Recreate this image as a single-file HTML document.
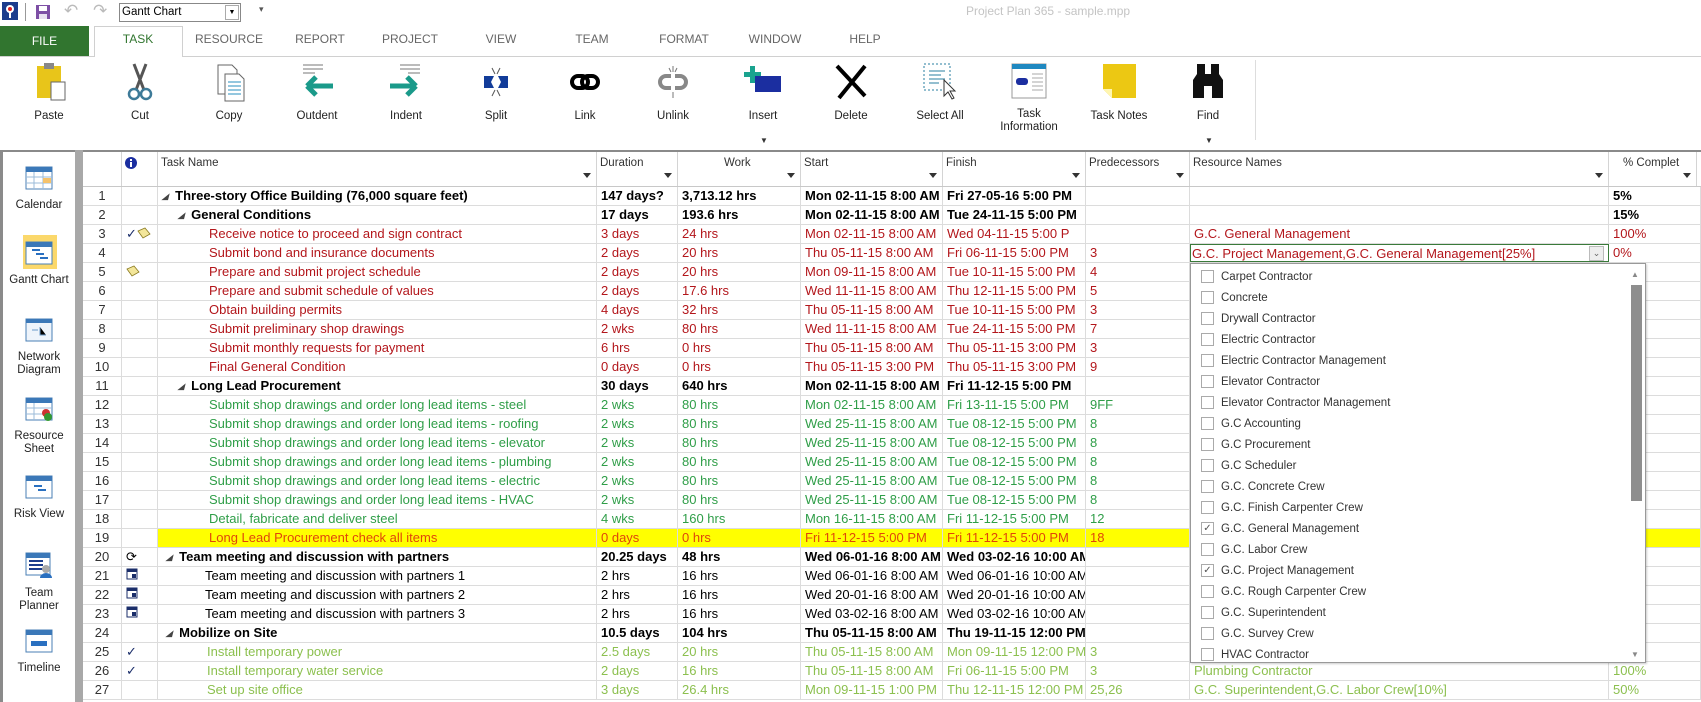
<!DOCTYPE html>
<html><head><meta charset="utf-8"><style>
*{box-sizing:border-box;margin:0;padding:0}
body{width:1701px;height:702px;overflow:hidden;background:#fff;font-family:"Liberation Sans",sans-serif;position:relative;color:#000}
.a{position:absolute}
.tab{position:absolute;top:32px;font-size:12px;color:#666;text-align:center;width:90px}
.rb{position:absolute;top:62px;width:80px;text-align:center;font-size:11.5px;color:#222}
.rb svg{display:block;margin:0 auto 8px}
.side{position:absolute;left:3px;width:72px;text-align:center;font-size:11.5px;color:#222;line-height:13px}
.side svg{display:block;margin:0 auto 8px}
.hd{position:absolute;top:152px;height:35px;border-right:1px solid #d4d4d4;font-size:11.5px;color:#333;padding:5px 0 0 3px}
.hd i{position:absolute;right:5px;bottom:9px;width:0;height:0;border-left:4px solid transparent;border-right:4px solid transparent;border-top:5px solid #333}
.row{position:absolute;left:83px;width:1618px;height:19px;border-bottom:1px solid #dcdcdc;font-size:13px;line-height:18px}
.row span{position:absolute;top:0;height:18px;white-space:nowrap;overflow:hidden;padding-left:4px;border-right:1px solid #dcdcdc}
.n{left:0;width:39px;text-align:center;padding:0!important;color:#333;background:#fff}
.i{left:39px;width:36px}
.t{left:75px;width:439px}
.d{left:514px;width:81px}
.w{left:595px;width:123px}
.s{left:718px;width:142px}
.f{left:860px;width:143px}
.p{left:1003px;width:104px}
.rn{left:1107px;width:419px}
.pc{left:1526px;width:92px}
.b{font-weight:bold}
.red{color:#b3161b}.grn{color:#2f9e48}.lg{color:#8cc04f}.or{color:#e0460a}
.y span:not(.n){background:#ffff00}
.tri{font-size:8px;color:#444;margin-right:7px;display:inline-block;transform:translateY(-1px)}
.dd{position:absolute;left:1190px;top:263px;width:456px;height:400px;background:#fff;border:1px solid #999;box-shadow:1px 1px 2px rgba(0,0,0,.2)}
.it{position:absolute;left:10px;font-size:11.5px;color:#333;height:16px;line-height:16px;white-space:nowrap}
.it b{display:inline-block;width:13px;height:13px;border:1px solid #aaa;vertical-align:middle;margin-right:7px;font-weight:normal;font-size:10px;line-height:11px;text-align:center;color:#555;overflow:hidden}
</style></head><body>

<svg class="a" style="left:2px;top:2px" width="18" height="20"><rect width="16" height="18" fill="#1b3c8c"/><circle cx="8" cy="7" r="4" fill="#fff"/><circle cx="8" cy="7" r="2" fill="#d22"/><rect x="7" y="10" width="2" height="6" fill="#fff"/></svg>
<div class="a" style="left:25px;top:3px;width:1px;height:18px;background:#999"></div>
<svg class="a" style="left:35px;top:4px" width="16" height="16"><rect x="1" y="1" width="14" height="14" fill="#7d4fa5"/><rect x="4" y="2" width="8" height="5" fill="#fff"/><rect x="4" y="10" width="8" height="5" fill="#e8e0f0"/></svg>
<div class="a" style="left:64px;top:1px;font-size:17px;color:#bbb">↶</div>
<div class="a" style="left:93px;top:1px;font-size:17px;color:#bbb">↷</div>
<div class="a" style="left:119px;top:3px;width:122px;height:19px;border:1px solid #888;font-size:11.5px;padding:2px 0 0 2px">Gantt Chart<div class="a" style="right:1px;top:1px;width:14px;height:15px;border:1px solid #aaa;font-size:7px;text-align:center;line-height:14px">▼</div></div>
<div class="a" style="left:259px;top:4px;font-size:9px;color:#555">▾</div>
<div class="a" style="left:966px;top:4px;font-size:12px;color:#c4c4c4">Project Plan 365 - sample.mpp</div>

<div class="a" style="left:0;top:26px;width:89px;height:30px;background:#31752f;color:#fff;font-size:12px;text-align:center;line-height:30px">FILE</div>
<div class="a" style="left:94px;top:26px;width:89px;height:31px;border:1px solid #d0d0d0;border-bottom:none;background:#fff"></div>
<div class="a" style="left:0;top:56px;width:1701px;height:1px;background:#d0d0d0"></div>
<div class="a" style="left:95px;top:56px;width:87px;height:1px;background:#fff"></div>
<div class="tab" style="left:93px;color:#31752f">TASK</div>
<div class="tab" style="left:184px">RESOURCE</div>
<div class="tab" style="left:275px">REPORT</div>
<div class="tab" style="left:365px">PROJECT</div>
<div class="tab" style="left:456px">VIEW</div>
<div class="tab" style="left:547px">TEAM</div>
<div class="tab" style="left:639px">FORMAT</div>
<div class="tab" style="left:730px">WINDOW</div>
<div class="tab" style="left:820px">HELP</div>

<div class="rb" style="left:9px"><svg width="40" height="40"><rect x="8" y="4" width="24" height="32" fill="#e8c51a"/><rect x="15" y="1" width="10" height="6" fill="#888"/><path d="M22 20h14v18H22z" fill="#fff" stroke="#666"/></svg>Paste</div>
<div class="rb" style="left:100px"><svg width="40" height="40"><path d="M14 2l10 26M26 2L16 28" stroke="#555" stroke-width="3"/><circle cx="14" cy="32" r="5" fill="none" stroke="#3d7a98" stroke-width="2.5"/><circle cx="26" cy="32" r="5" fill="none" stroke="#3d7a98" stroke-width="2.5"/></svg>Cut</div>
<div class="rb" style="left:189px"><svg width="40" height="40"><path d="M9 3h14l5 5v24H9z" fill="#fff" stroke="#666"/><path d="M16 12h14l5 5v22H16z" fill="#fff" stroke="#666"/><path d="M19 20h13M19 24h13M19 28h13M19 32h13" stroke="#2a8fbf"/></svg>Copy</div>
<div class="rb" style="left:277px"><svg width="40" height="40"><path d="M6 3h20M6 7h20M6 11h12" stroke="#777"/><path d="M10 24h26M10 24l9-9M10 24l9 9" stroke="#1a9a8a" stroke-width="5"/></svg>Outdent</div>
<div class="rb" style="left:366px"><svg width="40" height="40"><path d="M14 3h20M14 7h20M22 11h12" stroke="#777"/><path d="M4 24h26M30 24l-9-9M30 24l-9 9" stroke="#1a9a8a" stroke-width="5"/></svg>Indent</div>
<div class="rb" style="left:456px"><svg width="40" height="40"><path d="M8 14h10l-3 6 3 6H8zM32 14H22l3 6-3 6h10z" fill="#123c99"/><path d="M16 6l3 6M24 6l-3 6M16 34l3-6M24 34l-3-6" stroke="#555"/></svg>Split</div>
<div class="rb" style="left:545px"><svg width="40" height="40"><rect x="7" y="14" width="16" height="12" rx="6" fill="none" stroke="#000" stroke-width="4"/><rect x="17" y="14" width="16" height="12" rx="6" fill="none" stroke="#000" stroke-width="4"/></svg>Link</div>
<div class="rb" style="left:633px"><svg width="40" height="40"><path d="M18 14h-5a6 6 0 000 12h5M22 14h5a6 6 0 010 12h-5" fill="none" stroke="#888" stroke-width="4"/><path d="M20 4v6M20 30v6M16 6l2 4M24 6l-2 4" stroke="#777"/></svg>Unlink</div>
<div class="rb" style="left:723px"><svg width="40" height="40"><path d="M7 4h5v6h6v5h-6v6H7v-6H1v-5h6z" fill="#1aa38f"/><rect x="12" y="14" width="26" height="16" fill="#1b2ea0"/></svg>Insert</div>
<div class="rb" style="left:811px"><svg width="40" height="40"><path d="M6 4l28 30M34 4L8 36" stroke="#000" stroke-width="4"/></svg>Delete</div>
<div class="rb" style="left:900px"><svg width="40" height="40"><rect x="4" y="2" width="26" height="26" fill="none" stroke="#2a7fa0" stroke-dasharray="2 2"/><path d="M9 9h16M9 13h12M9 17h16M9 21h10" stroke="#2a7fa0"/><path d="M24 18v16l4-4 4 7 2-1-4-7h5z" fill="#fff" stroke="#333"/></svg>Select All</div>
<div class="rb" style="left:989px;line-height:13px;top:62px"><svg width="40" height="40" style="margin-bottom:6px"><rect x="3" y="2" width="34" height="34" fill="#fff" stroke="#999"/><rect x="3" y="2" width="34" height="5" fill="#1f88c0"/><rect x="7" y="16" width="12" height="7" rx="3" fill="#1b2ea0"/><path d="M23 12h11M23 16h11M23 20h11M23 24h11M23 28h11" stroke="#aaa"/></svg>Task<br>Information</div>
<div class="rb" style="left:1079px"><svg width="40" height="40"><path d="M4 2h33v34H13l-9-9z" fill="#ecc813"/><path d="M4 27h9v9z" fill="#fff6b0"/></svg>Task Notes</div>
<div class="rb" style="left:1168px"><svg width="40" height="40"><path d="M9 2h8v10h6V2h8v10l4 6v18H24V24h-8v12H5V18l4-6z" fill="#111"/></svg>Find</div>
<div class="a" style="left:760px;top:136px;font-size:8px;color:#333">▼</div>
<div class="a" style="left:1205px;top:136px;font-size:8px;color:#333">▼</div>
<div class="a" style="left:1255px;top:60px;width:1px;height:80px;background:#ddd"></div>

<div class="a" style="left:0;top:150px;width:1701px;height:2px;background:#8a8a8a"></div>
<div class="a" style="left:0;top:150px;width:3px;height:552px;background:#8a8a8a"></div>
<div class="a" style="left:75px;top:150px;width:8px;height:552px;background:#a8a8a8"></div>

<div class="side" style="top:165px"><svg width="30" height="26"><rect x="2" y="2" width="26" height="22" fill="#fff" stroke="#4a7fb5"/><rect x="2" y="2" width="26" height="5" fill="#3b78b8"/><path d="M2 12h26M2 18h26M10 7v17M19 7v17" stroke="#9bbbd9"/><rect x="19" y="13" width="8" height="5" fill="#f5c26b"/></svg>Calendar</div>
<div class="a" style="left:23px;top:235px;width:34px;height:34px;background:#fbd86b"></div>
<div class="side" style="top:240px"><svg width="30" height="26"><rect x="2" y="2" width="26" height="22" fill="#fff" stroke="#4a7fb5"/><rect x="2" y="2" width="26" height="5" fill="#3b78b8"/><path d="M8 10h8M12 14h8M16 18h8" stroke="#2a70c0" stroke-width="2"/></svg>Gantt Chart</div>
<div class="side" style="top:317px"><svg width="30" height="26"><rect x="2" y="2" width="26" height="22" fill="#eef4fb" stroke="#4a7fb5"/><rect x="2" y="2" width="26" height="4" fill="#3b78b8"/><path d="M8 13h6M16 10v8h6" stroke="#6a9ac9"/></svg>Network<br>Diagram</div>
<div class="side" style="top:396px"><svg width="30" height="26"><rect x="2" y="2" width="26" height="22" fill="#fff" stroke="#4a7fb5"/><rect x="2" y="2" width="26" height="5" fill="#3b78b8"/><path d="M2 12h26M2 18h26M10 7v17" stroke="#9bbbd9"/><circle cx="22" cy="17" r="4" fill="#c33"/><circle cx="24" cy="21" r="4" fill="#393"/></svg>Resource<br>Sheet</div>
<div class="side" style="top:474px"><svg width="30" height="26"><rect x="2" y="2" width="26" height="22" fill="#fff" stroke="#4a7fb5"/><rect x="2" y="2" width="26" height="5" fill="#3b78b8"/><path d="M10 12h8M14 16h8" stroke="#2a70c0" stroke-width="2"/></svg>Risk View</div>
<div class="side" style="top:551px"><svg width="30" height="28"><rect x="2" y="2" width="24" height="22" fill="#fff" stroke="#4a7fb5"/><rect x="2" y="2" width="24" height="5" fill="#3b78b8"/><path d="M5 10h14M5 14h14M5 18h14" stroke="#1b3c8c" stroke-width="2"/><circle cx="22" cy="18" r="4" fill="#aaa"/><path d="M16 27a6 5 0 0112 0z" fill="#2a70c0"/></svg>Team<br>Planner</div>
<div class="side" style="top:628px"><svg width="30" height="26"><rect x="2" y="2" width="26" height="22" fill="#fff" stroke="#4a7fb5"/><rect x="2" y="2" width="26" height="5" fill="#3b78b8"/><rect x="7" y="13" width="16" height="5" fill="#2a70c0"/></svg>Timeline</div>

<div class="hd" style="left:83px;width:39px"></div>
<div class="hd" style="left:122px;width:36px"><svg width="12" height="12"><circle cx="6" cy="6" r="6" fill="#1b2ea0"/><rect x="5" y="5" width="2" height="5" fill="#fff"/><rect x="5" y="2" width="2" height="2" fill="#fff"/></svg></div>
<div class="hd" style="left:158px;width:439px">Task Name<i></i></div>
<div class="hd" style="left:597px;width:81px">Duration<i></i></div>
<div class="hd" style="left:678px;width:123px;padding-left:46px">Work<i></i></div>
<div class="hd" style="left:801px;width:142px">Start<i></i></div>
<div class="hd" style="left:943px;width:143px">Finish<i></i></div>
<div class="hd" style="left:1086px;width:104px">Predecessors<i></i></div>
<div class="hd" style="left:1190px;width:419px">Resource Names<i></i></div>
<div class="hd" style="left:1609px;width:88px;padding-left:14px">% Complet<i></i></div>
<div class="a" style="left:83px;top:186px;width:1618px;height:1px;background:#c8c8c8"></div>

<div class="row b" style="top:187px"><span class="n" style="font-weight:normal">1</span><span class="i"></span><span class="t"><em class="tri">◢</em>Three-story Office Building (76,000 square feet)</span><span class="d">147 days?</span><span class="w">3,713.12 hrs</span><span class="s">Mon 02-11-15 8:00 AM</span><span class="f">Fri 27-05-16 5:00 PM</span><span class="p"></span><span class="rn"></span><span class="pc">5%</span></div>
<div class="row b" style="top:206px"><span class="n" style="font-weight:normal">2</span><span class="i"></span><span class="t" style="padding-left:20px"><em class="tri">◢</em>General Conditions</span><span class="d">17 days</span><span class="w">193.6 hrs</span><span class="s">Mon 02-11-15 8:00 AM</span><span class="f">Tue 24-11-15 5:00 PM</span><span class="p"></span><span class="rn"></span><span class="pc">15%</span></div>
<div class="row red" style="top:225px"><span class="n">3</span><span class="i" style="color:#1b2e6a">✓<svg width="14" height="12" style="vertical-align:-1px"><path d="M1 4l7-3 5 6-7 4z" fill="#f3e69a" stroke="#8a7a20" stroke-width=".8"/></svg></span><span class="t" style="padding-left:51px">Receive notice to proceed and sign contract</span><span class="d">3 days</span><span class="w">24 hrs</span><span class="s">Mon 02-11-15 8:00 AM</span><span class="f">Wed 04-11-15 5:00 P</span><span class="p"></span><span class="rn">G.C. General Management</span><span class="pc">100%</span></div>
<div class="row red" style="top:244px"><span class="n">4</span><span class="i"></span><span class="t" style="padding-left:51px">Submit bond and insurance documents</span><span class="d">2 days</span><span class="w">20 hrs</span><span class="s">Thu 05-11-15 8:00 AM</span><span class="f">Fri 06-11-15 5:00 PM</span><span class="p">3</span><span class="rn" style="border:1px solid #3a7a3a;padding-left:1px">G.C. Project Management,G.C. General Management[25%]</span><span class="pc">0%</span></div>
<div class="a" style="left:1589px;top:246px;width:15px;height:15px;border:1px solid #bbb;background:#eee;font-size:9px;text-align:center;line-height:13px;color:#666">⌄</div>
<div class="row red" style="top:263px"><span class="n">5</span><span class="i"><svg width="14" height="12" style="vertical-align:-1px"><path d="M1 4l7-3 5 6-7 4z" fill="#f3e69a" stroke="#8a7a20" stroke-width=".8"/></svg></span><span class="t" style="padding-left:51px">Prepare and submit project schedule</span><span class="d">2 days</span><span class="w">20 hrs</span><span class="s">Mon 09-11-15 8:00 AM</span><span class="f">Tue 10-11-15 5:00 PM</span><span class="p">4</span><span class="rn"></span><span class="pc"></span></div>
<div class="row red" style="top:282px"><span class="n">6</span><span class="i"></span><span class="t" style="padding-left:51px">Prepare and submit schedule of values</span><span class="d">2 days</span><span class="w">17.6 hrs</span><span class="s">Wed 11-11-15 8:00 AM</span><span class="f">Thu 12-11-15 5:00 PM</span><span class="p">5</span><span class="rn"></span><span class="pc"></span></div>
<div class="row red" style="top:301px"><span class="n">7</span><span class="i"></span><span class="t" style="padding-left:51px">Obtain building permits</span><span class="d">4 days</span><span class="w">32 hrs</span><span class="s">Thu 05-11-15 8:00 AM</span><span class="f">Tue 10-11-15 5:00 PM</span><span class="p">3</span><span class="rn"></span><span class="pc"></span></div>
<div class="row red" style="top:320px"><span class="n">8</span><span class="i"></span><span class="t" style="padding-left:51px">Submit preliminary shop drawings</span><span class="d">2 wks</span><span class="w">80 hrs</span><span class="s">Wed 11-11-15 8:00 AM</span><span class="f">Tue 24-11-15 5:00 PM</span><span class="p">7</span><span class="rn"></span><span class="pc"></span></div>
<div class="row red" style="top:339px"><span class="n">9</span><span class="i"></span><span class="t" style="padding-left:51px">Submit monthly requests for payment</span><span class="d">6 hrs</span><span class="w">0 hrs</span><span class="s">Thu 05-11-15 8:00 AM</span><span class="f">Thu 05-11-15 3:00 PM</span><span class="p">3</span><span class="rn"></span><span class="pc"></span></div>
<div class="row red" style="top:358px"><span class="n">10</span><span class="i"></span><span class="t" style="padding-left:51px">Final General Condition</span><span class="d">0 days</span><span class="w">0 hrs</span><span class="s">Thu 05-11-15 3:00 PM</span><span class="f">Thu 05-11-15 3:00 PM</span><span class="p">9</span><span class="rn"></span><span class="pc"></span></div>
<div class="row b" style="top:377px"><span class="n" style="font-weight:normal">11</span><span class="i"></span><span class="t" style="padding-left:20px"><em class="tri">◢</em>Long Lead Procurement</span><span class="d">30 days</span><span class="w">640 hrs</span><span class="s">Mon 02-11-15 8:00 AM</span><span class="f">Fri 11-12-15 5:00 PM</span><span class="p"></span><span class="rn"></span><span class="pc"></span></div>
<div class="row grn" style="top:396px"><span class="n">12</span><span class="i"></span><span class="t" style="padding-left:51px">Submit shop drawings and order long lead items - steel</span><span class="d">2 wks</span><span class="w">80 hrs</span><span class="s">Mon 02-11-15 8:00 AM</span><span class="f">Fri 13-11-15 5:00 PM</span><span class="p">9FF</span><span class="rn"></span><span class="pc"></span></div>
<div class="row grn" style="top:415px"><span class="n">13</span><span class="i"></span><span class="t" style="padding-left:51px">Submit shop drawings and order long lead items - roofing</span><span class="d">2 wks</span><span class="w">80 hrs</span><span class="s">Wed 25-11-15 8:00 AM</span><span class="f">Tue 08-12-15 5:00 PM</span><span class="p">8</span><span class="rn"></span><span class="pc"></span></div>
<div class="row grn" style="top:434px"><span class="n">14</span><span class="i"></span><span class="t" style="padding-left:51px">Submit shop drawings and order long lead items - elevator</span><span class="d">2 wks</span><span class="w">80 hrs</span><span class="s">Wed 25-11-15 8:00 AM</span><span class="f">Tue 08-12-15 5:00 PM</span><span class="p">8</span><span class="rn"></span><span class="pc"></span></div>
<div class="row grn" style="top:453px"><span class="n">15</span><span class="i"></span><span class="t" style="padding-left:51px">Submit shop drawings and order long lead items - plumbing</span><span class="d">2 wks</span><span class="w">80 hrs</span><span class="s">Wed 25-11-15 8:00 AM</span><span class="f">Tue 08-12-15 5:00 PM</span><span class="p">8</span><span class="rn"></span><span class="pc"></span></div>
<div class="row grn" style="top:472px"><span class="n">16</span><span class="i"></span><span class="t" style="padding-left:51px">Submit shop drawings and order long lead items - electric</span><span class="d">2 wks</span><span class="w">80 hrs</span><span class="s">Wed 25-11-15 8:00 AM</span><span class="f">Tue 08-12-15 5:00 PM</span><span class="p">8</span><span class="rn"></span><span class="pc"></span></div>
<div class="row grn" style="top:491px"><span class="n">17</span><span class="i"></span><span class="t" style="padding-left:51px">Submit shop drawings and order long lead items - HVAC</span><span class="d">2 wks</span><span class="w">80 hrs</span><span class="s">Wed 25-11-15 8:00 AM</span><span class="f">Tue 08-12-15 5:00 PM</span><span class="p">8</span><span class="rn"></span><span class="pc"></span></div>
<div class="row grn" style="top:510px"><span class="n">18</span><span class="i"></span><span class="t" style="padding-left:51px">Detail, fabricate and deliver steel</span><span class="d">4 wks</span><span class="w">160 hrs</span><span class="s">Mon 16-11-15 8:00 AM</span><span class="f">Fri 11-12-15 5:00 PM</span><span class="p">12</span><span class="rn"></span><span class="pc"></span></div>
<div class="row or y" style="top:529px"><span class="n">19</span><span class="i" style="background:#fff!important"></span><span class="t" style="padding-left:51px">Long Lead Procurement check all items</span><span class="d">0 days</span><span class="w">0 hrs</span><span class="s">Fri 11-12-15 5:00 PM</span><span class="f">Fri 11-12-15 5:00 PM</span><span class="p">18</span><span class="rn"></span><span class="pc"></span></div>
<div class="row b" style="top:548px"><span class="n" style="font-weight:normal">20</span><span class="i" style="font-weight:normal">⟳</span><span class="t" style="padding-left:8px"><em class="tri">◢</em>Team meeting and discussion with partners</span><span class="d">20.25 days</span><span class="w">48 hrs</span><span class="s">Wed 06-01-16 8:00 AM</span><span class="f">Wed 03-02-16 10:00 AM</span><span class="p"></span><span class="rn"></span><span class="pc"></span></div>
<div class="row" style="top:567px"><span class="n">21</span><span class="i"><svg width="12" height="12"><rect x="1" y="1" width="10" height="10" fill="#fff" stroke="#1b2e6a"/><rect x="1" y="1" width="10" height="3" fill="#1b2e6a"/><rect x="6" y="6" width="4" height="4" fill="#1b2e6a"/></svg></span><span class="t" style="padding-left:47px">Team meeting and discussion with partners 1</span><span class="d">2 hrs</span><span class="w">16 hrs</span><span class="s">Wed 06-01-16 8:00 AM</span><span class="f">Wed 06-01-16 10:00 AM</span><span class="p"></span><span class="rn"></span><span class="pc"></span></div>
<div class="row" style="top:586px"><span class="n">22</span><span class="i"><svg width="12" height="12"><rect x="1" y="1" width="10" height="10" fill="#fff" stroke="#1b2e6a"/><rect x="1" y="1" width="10" height="3" fill="#1b2e6a"/><rect x="6" y="6" width="4" height="4" fill="#1b2e6a"/></svg></span><span class="t" style="padding-left:47px">Team meeting and discussion with partners 2</span><span class="d">2 hrs</span><span class="w">16 hrs</span><span class="s">Wed 20-01-16 8:00 AM</span><span class="f">Wed 20-01-16 10:00 AM</span><span class="p"></span><span class="rn"></span><span class="pc"></span></div>
<div class="row" style="top:605px"><span class="n">23</span><span class="i"><svg width="12" height="12"><rect x="1" y="1" width="10" height="10" fill="#fff" stroke="#1b2e6a"/><rect x="1" y="1" width="10" height="3" fill="#1b2e6a"/><rect x="6" y="6" width="4" height="4" fill="#1b2e6a"/></svg></span><span class="t" style="padding-left:47px">Team meeting and discussion with partners 3</span><span class="d">2 hrs</span><span class="w">16 hrs</span><span class="s">Wed 03-02-16 8:00 AM</span><span class="f">Wed 03-02-16 10:00 AM</span><span class="p"></span><span class="rn"></span><span class="pc"></span></div>
<div class="row b" style="top:624px"><span class="n" style="font-weight:normal">24</span><span class="i"></span><span class="t" style="padding-left:8px"><em class="tri">◢</em>Mobilize on Site</span><span class="d">10.5 days</span><span class="w">104 hrs</span><span class="s">Thu 05-11-15 8:00 AM</span><span class="f">Thu 19-11-15 12:00 PM</span><span class="p"></span><span class="rn"></span><span class="pc"></span></div>
<div class="row lg" style="top:643px"><span class="n">25</span><span class="i" style="color:#1b2e6a">✓</span><span class="t" style="padding-left:49px">Install temporary power</span><span class="d">2.5 days</span><span class="w">20 hrs</span><span class="s">Thu 05-11-15 8:00 AM</span><span class="f">Mon 09-11-15 12:00 PM</span><span class="p">3</span><span class="rn"></span><span class="pc">%</span></div>
<div class="row lg" style="top:662px"><span class="n">26</span><span class="i" style="color:#1b2e6a">✓</span><span class="t" style="padding-left:49px">Install temporary water service</span><span class="d">2 days</span><span class="w">16 hrs</span><span class="s">Thu 05-11-15 8:00 AM</span><span class="f">Fri 06-11-15 5:00 PM</span><span class="p">3</span><span class="rn">Plumbing Contractor</span><span class="pc">100%</span></div>
<div class="row lg" style="top:681px"><span class="n">27</span><span class="i"></span><span class="t" style="padding-left:49px">Set up site office</span><span class="d">3 days</span><span class="w">26.4 hrs</span><span class="s">Mon 09-11-15 1:00 PM</span><span class="f">Thu 12-11-15 12:00 PM</span><span class="p">25,26</span><span class="rn">G.C. Superintendent,G.C. Labor Crew[10%]</span><span class="pc">50%</span></div>

<div class="dd">
<div class="it" style="top:5px"><b></b>Carpet Contractor</div>
<div class="it" style="top:26px"><b></b>Concrete</div>
<div class="it" style="top:47px"><b></b>Drywall Contractor</div>
<div class="it" style="top:68px"><b></b>Electric Contractor</div>
<div class="it" style="top:89px"><b></b>Electric Contractor Management</div>
<div class="it" style="top:110px"><b></b>Elevator Contractor</div>
<div class="it" style="top:131px"><b></b>Elevator Contractor Management</div>
<div class="it" style="top:152px"><b></b>G.C Accounting</div>
<div class="it" style="top:173px"><b></b>G.C Procurement</div>
<div class="it" style="top:194px"><b></b>G.C Scheduler</div>
<div class="it" style="top:215px"><b></b>G.C. Concrete Crew</div>
<div class="it" style="top:236px"><b></b>G.C. Finish Carpenter Crew</div>
<div class="it" style="top:257px"><b>✓</b>G.C. General Management</div>
<div class="it" style="top:278px"><b></b>G.C. Labor Crew</div>
<div class="it" style="top:299px"><b>✓</b>G.C. Project Management</div>
<div class="it" style="top:320px"><b></b>G.C. Rough Carpenter Crew</div>
<div class="it" style="top:341px"><b></b>G.C. Superintendent</div>
<div class="it" style="top:362px"><b></b>G.C. Survey Crew</div>
<div class="it" style="top:383px"><b></b>HVAC Contractor</div>
<div class="a" style="left:440px;top:6px;font-size:8px;color:#888">▲</div>
<div class="a" style="left:440px;top:21px;width:11px;height:216px;background:#8e8e8e"></div>
<div class="a" style="left:440px;top:386px;font-size:8px;color:#888">▼</div>
</div>
</body></html>
